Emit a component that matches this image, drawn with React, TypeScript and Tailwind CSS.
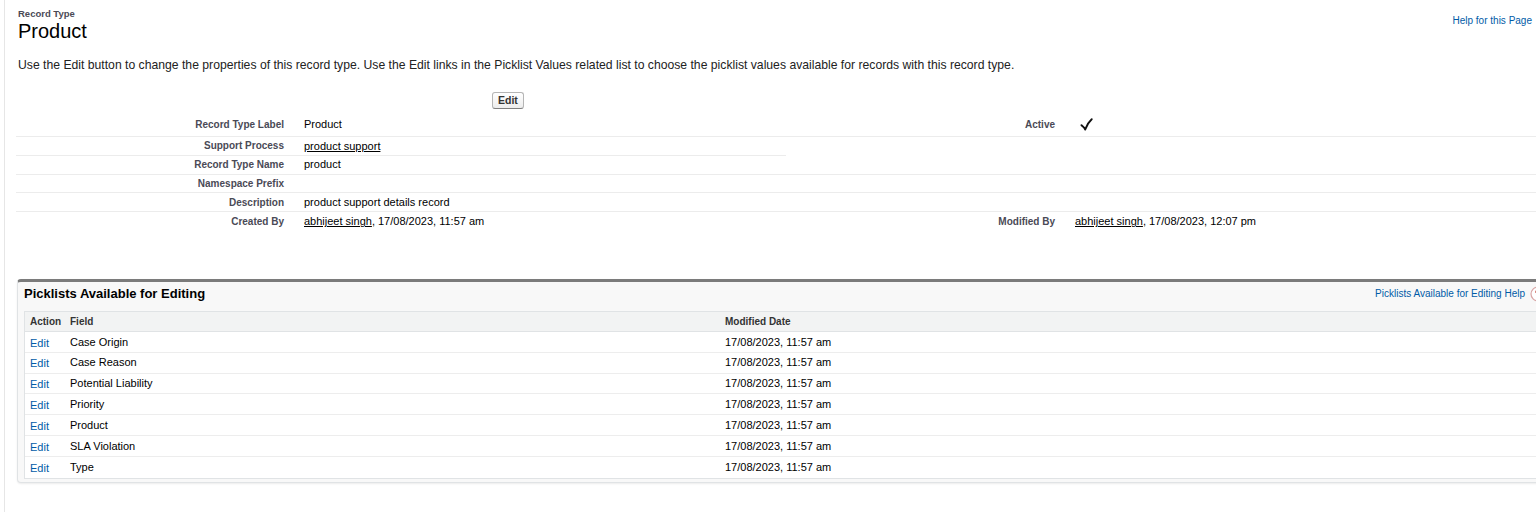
import React from 'react';

const font = "font-['Liberation_Sans',Arial,sans-serif]";

type DetailRow = {
  label: string;
  value?: React.ReactNode;
  label2?: string;
  value2?: React.ReactNode;
  tall?: boolean;
  border: 'full' | 'half' | 'none';
};

const UserLink = ({ children }: { children: React.ReactNode }) => (
  <a className="text-black underline underline-offset-[1px] cursor-pointer">{children}</a>
);

const Check = () => (
  <svg width="13" height="13" viewBox="0 0 12 13" className="ml-[5px] inline-block">
    <path d="M1 7.2 L3.6 9.6 Q4.3 10.6 4.6 11.6 Q6.8 5.2 11.2 1.2" fill="none" stroke="#111" strokeWidth="1.9" strokeLinecap="round" strokeLinejoin="round" />
  </svg>
);

const detailRows: DetailRow[] = [
  { label: 'Record Type Label', value: 'Product', label2: 'Active', value2: <Check />, tall: true, border: 'full' },
  { label: 'Support Process', value: <UserLink>product support</UserLink>, border: 'half' },
  { label: 'Record Type Name', value: 'product', border: 'full' },
  { label: 'Namespace Prefix', value: '', border: 'full' },
  { label: 'Description', value: 'product support details record', border: 'full' },
  {
    label: 'Created By',
    value: <><UserLink>abhijeet singh</UserLink>, 17/08/2023, 11:57 am</>,
    label2: 'Modified By',
    value2: <><UserLink>abhijeet singh</UserLink>, 17/08/2023, 12:07 pm</>,
    border: 'none',
  },
];

const picklists = ['Case Origin', 'Case Reason', 'Potential Liability', 'Priority', 'Product', 'SLA Violation', 'Type'];

const App = () => {
  return (
    <div className={`w-[1536px] min-h-[512px] overflow-hidden bg-white pl-[4px] ${font}`}>
      <div className="min-h-[512px] border-l border-[#e6e6e6] pl-[11px] pt-[8px]">
        {/* Page title */}
        <div className="flex justify-between pl-[2px]">
          <div>
            <div className="text-[9.5px] font-bold leading-[12px] text-[#4a4a56]">Record Type</div>
            <h1 className="text-[20px] leading-[22px] text-black">Product</h1>
          </div>
          <a className="mt-[6px] mr-[4px] h-[13px] cursor-pointer text-[10px] leading-[13px] text-[#015ba7]">Help for this Page</a>
        </div>

        <p className="mt-[16px] pl-[2px] text-[12.2px] leading-[14px] text-[#222]">
          Use the Edit button to change the properties of this record type. Use the Edit links in the Picklist Values related list to choose the picklist values available for records with this record type.
        </p>

        {/* Edit button */}
        <div className="mt-[20px] mb-[3px] flex pl-[476px]">
          <button className="h-[17px] rounded-[3px] border border-[#b5b5b5] border-b-[#7f7f7f] bg-gradient-to-b from-white to-[#ededed] px-[5px] text-[10.5px] font-bold leading-[15px] text-[#333]">
            Edit
          </button>
        </div>

        {/* Detail table */}
        <div className="w-[1525px]">
          {detailRows.map((row, i) => {
            const left = row.border === 'none' ? '' : 'border-b border-[#ececec]';
            const right = row.border === 'full' ? 'border-b border-[#ececec]' : '';
            const h = row.tall ? 'h-[25px]' : 'h-[18.8px]';
            return (
              <div key={i} className={`flex ${h} text-[11px]`}>
                <div className={`flex w-[278px] items-center justify-end pr-[10px] text-[10px] font-bold text-[#4a4a56] ${left}`}>{row.label}</div>
                <div className={`flex w-[492px] items-center pl-[10px] text-black ${left}`}>{row.value}</div>
                <div className={`flex w-[279px] items-center justify-end pr-[10px] text-[10px] font-bold text-[#4a4a56] ${right}`}>{row.label2}</div>
                <div className={`flex flex-1 items-center pl-[10px] text-black ${right}`}>{row.value2}</div>
              </div>
            );
          })}
        </div>

        {/* Picklists related list */}
        <div className="mt-[48px] ml-[1px] w-[1543px] rounded-[4px] border border-t-[3px] border-[#e0e3e5] border-t-[#7b7b7b] bg-[#f8f8f8] pb-[3px] pl-[6px] shadow-[0_1px_2px_rgba(0,0,0,0.08)]">
          <div className="flex h-[29px] items-start justify-between pt-[4px] pr-[13px]">
            <h3 className="text-[13px] font-bold leading-[16px] text-black">Picklists Available for Editing</h3>
            <div className="flex items-center">
              <a className="cursor-pointer text-[10px] leading-[16px] text-[#015ba7]">Picklists Available for Editing Help</a>
              <svg width="16" height="16" viewBox="0 0 16 16" className="ml-[5px]">
                <circle cx="8" cy="8" r="7" fill="#fff" stroke="#d8a4a4" strokeWidth="1.2" />
                <path d="M6 6.2 Q6 4.3 8 4.3 Q10 4.3 10 6 Q10 7.2 8.6 7.8 Q8 8.1 8 9.2 M8 10.8 L8 11.6" fill="none" stroke="#c0392b" strokeWidth="1.4" strokeLinecap="round" />
              </svg>
            </div>
          </div>
          <div className="border border-[#e0e3e5] bg-white">
            <div className="flex h-[20px] items-center border-b border-[#e0e3e5] bg-[#f2f3f3] text-[10px] font-bold text-[#333]">
              <div className="w-[39px] pl-[5px]">Action</div>
              <div className="w-[655px] pl-[6px]">Field</div>
              <div className="flex-1 pl-[6px]">Modified Date</div>
            </div>
            {picklists.map((name, i) => (
              <div key={name} className={`flex h-[20.8px] items-center text-[11px] ${i < picklists.length - 1 ? 'border-b border-[#ededed]' : ''}`}>
                <div className="w-[39px] pl-[5px] pt-[2px]">
                  <a className="cursor-pointer text-[#015ba7]">Edit</a>
                </div>
                <div className="w-[655px] pl-[6px] text-black">{name}</div>
                <div className="flex-1 pl-[6px] text-black">17/08/2023, 11:57 am</div>
              </div>
            ))}
          </div>
        </div>
      </div>
    </div>
  );
};

export default App;
